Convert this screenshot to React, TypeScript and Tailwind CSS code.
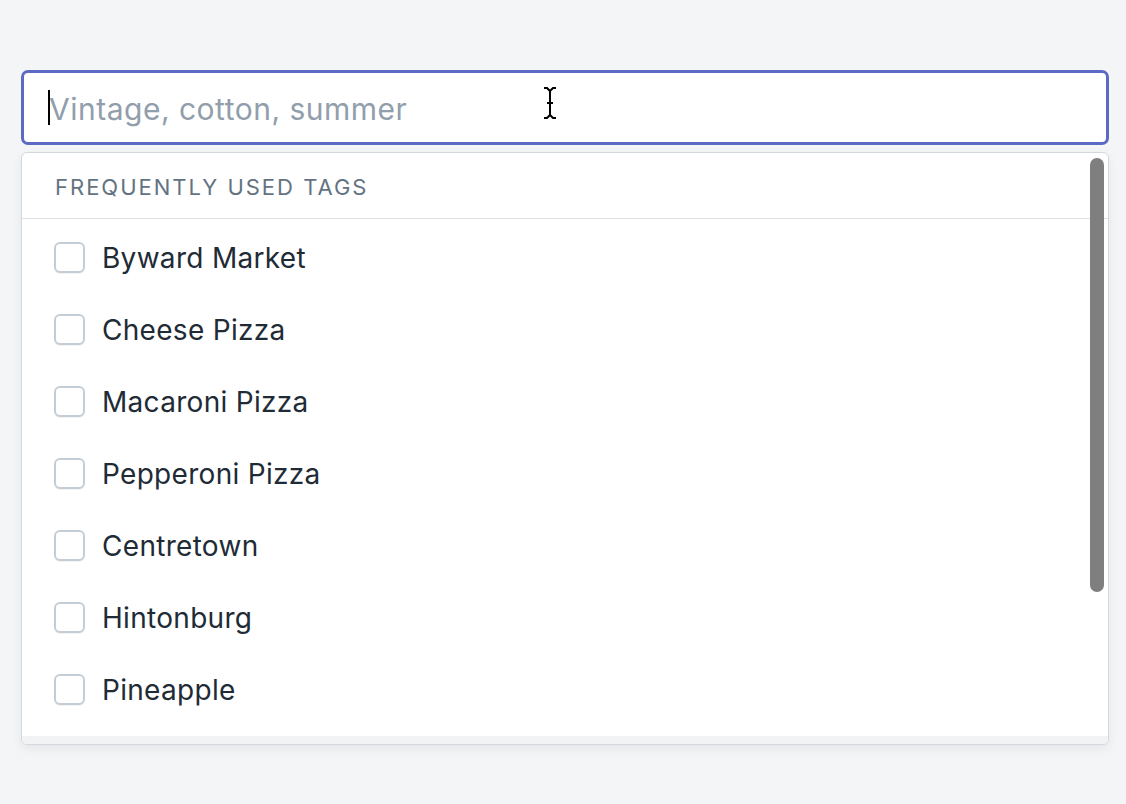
import React from 'react';

const tags = [
  'Byward Market',
  'Cheese Pizza',
  'Macaroni Pizza',
  'Pepperoni Pizza',
  'Centretown',
  'Hintonburg',
  'Pineapple',
];

const Checkbox: React.FC = () => (
  <span className="w-[31px] h-[31px] shrink-0 -translate-y-[1px] rounded-[6px] border-2 border-[#c4cdd5] bg-white shadow-[0_1px_0_rgba(22,29,37,0.05)]" />
);

const App: React.FC = () => {
  return (
    <div
      className="min-h-[804px] bg-[#f4f5f7] pt-[70px]"
      style={{ fontFamily: 'Inter, "Noto Sans", sans-serif' }}
    >
      {/* Tag search input */}
      <div className="relative ml-[21px] w-[1088px] h-[75px] rounded-[7px] border-[3px] border-[#5c6ac4] bg-white flex items-center pl-[25px] pt-[3px]">
        <span className="absolute left-[24px] top-[17px] w-[2px] h-[35px] bg-black" />
        <span className="text-[30px] text-[#919eab] tracking-[0.5px]">Vintage, cotton, summer</span>
        {/* I-beam cursor */}
        <svg className="absolute left-[517px] top-[13px]" width="18" height="34" viewBox="0 0 18 34">
          <path
            d="M3 2 L6 2 L9 5 L12 2 L15 2 M9 5 L9 29 M3 32 L6 32 L9 29 L12 32 L15 32 M6 17 L12 17"
            fill="none"
            stroke="#000"
            strokeWidth="2"
          />
        </svg>
      </div>

      {/* Dropdown */}
      <div className="relative ml-[21px] mt-[7px] w-[1088px] h-[593px] rounded-[6px] border border-[#d3d8de] bg-white shadow-[0_4px_10px_rgba(63,63,68,0.08)] overflow-hidden flex flex-col">
        <div className="h-[66px] shrink-0 flex items-center px-[33px] pt-[3px] border-b border-[#dfe3e8]">
          <span className="text-[22px] tracking-[2px] text-[#637381] uppercase">Frequently used tags</span>
        </div>
        <ul className="flex-1 pt-[3px]">
          {tags.map((t) => (
            <li key={t} className="h-[72px] flex items-center gap-[17px] pl-[32px]">
              <Checkbox />
              <span className="text-[28px] tracking-[0.3px] text-[#212b36]">{t}</span>
            </li>
          ))}
        </ul>
        <div className="h-[8px] shrink-0 bg-[#f1f3f5]" />
        {/* scrollbar thumb */}
        <div className="absolute right-[4px] top-[5px] w-[14px] h-[434px] rounded-full bg-[#7f7f7f]" />
      </div>
    </div>
  );
};

export default App;
